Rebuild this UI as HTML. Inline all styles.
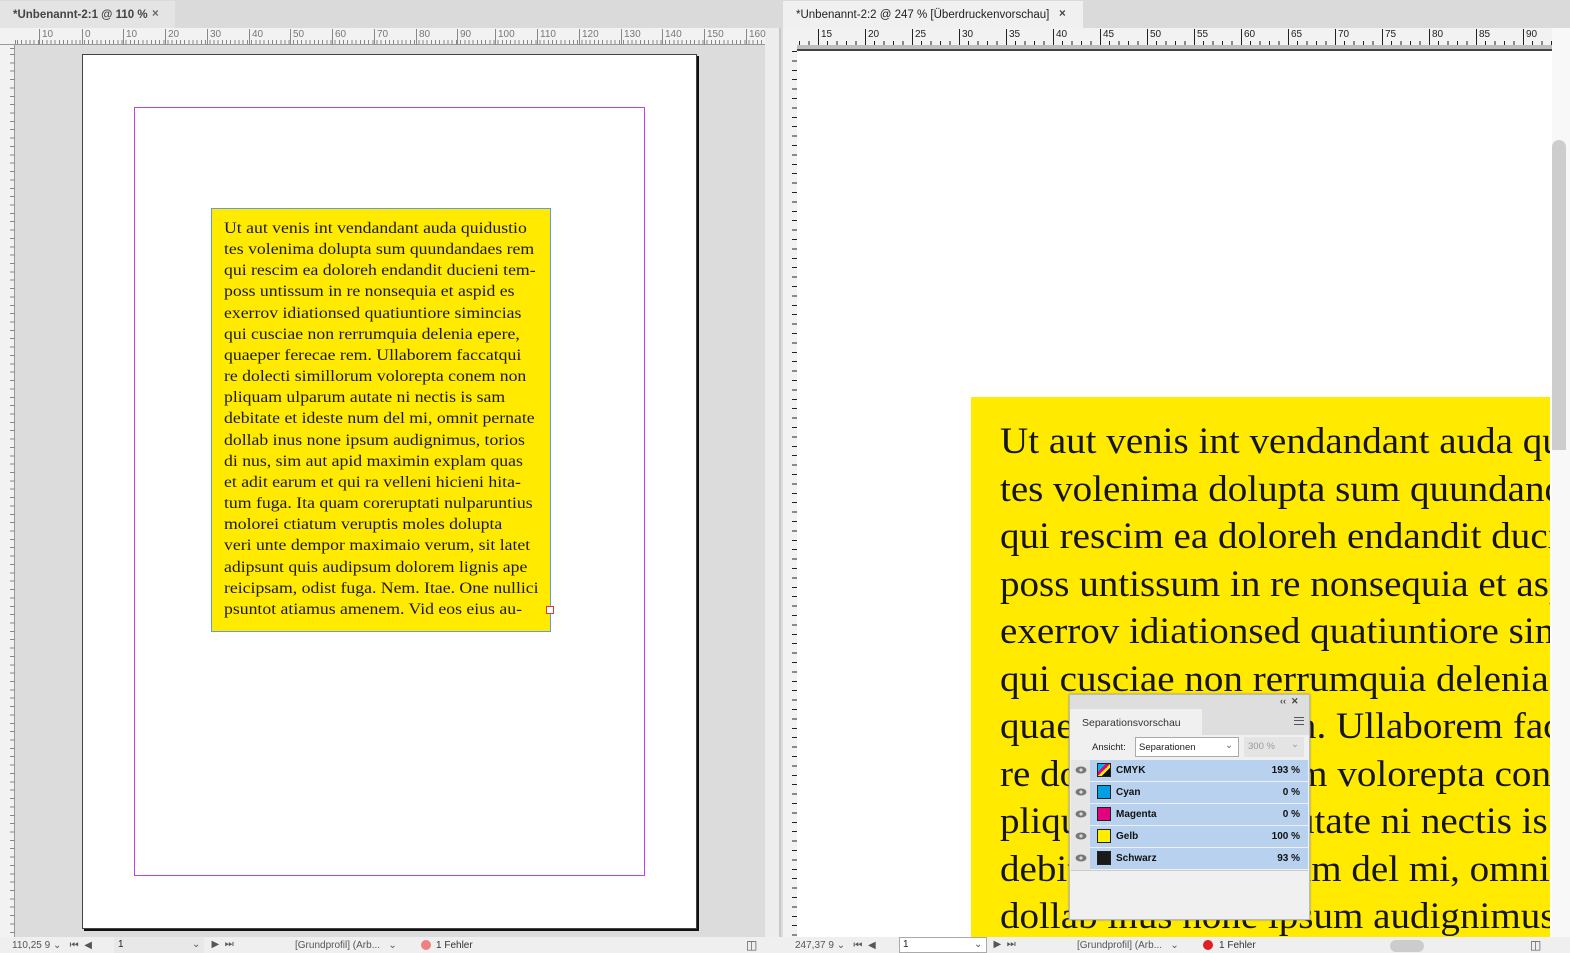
<!DOCTYPE html>
<html><head><meta charset="utf-8"><style>
*{margin:0;padding:0;box-sizing:border-box}
body{width:1570px;height:953px;overflow:hidden;background:#dcdcdc;font-family:"Liberation Sans",sans-serif;position:relative}
.a{position:absolute}
.tab{font-size:11.5px;color:#333;font-weight:bold}
.hr{background:#f2f2f2;height:17px;border-bottom:1px solid #999}
.lbl{position:absolute;top:1px;font-size:10px;color:#777;border-left:1px solid #888;padding-left:2px;height:16px}
.lblr{position:absolute;top:1px;font-size:10px;color:#222;border-left:1px solid #222;padding-left:2px;height:16px}
.serif{font-family:"Liberation Serif",serif;color:#1a1a1a}
.row{position:absolute;left:0;right:1px;height:21px;background:#b7d1ee;font-size:10px;font-weight:bold;color:#111}
.row .sw{position:absolute;left:7px;top:3px;width:14px;height:14px;border:1px solid #222}
.row .n{position:absolute;left:26px;top:5px}
.row .p{position:absolute;right:8px;top:5px}
.row .eye{position:absolute;left:-15px;top:4px;width:12px;height:12px}
.sb{font-size:10px;color:#555}
</style></head><body>
<div class="a" style="left:0;top:0;width:1570px;height:28px;background:#dadada"></div>
<div class="a" style="left:0;top:1px;width:175px;height:27px;background:#e4e4e4"></div>
<div class="a tab" style="left:13px;top:9px;color:#444">*Unbenannt-2:1 @ 110 %</div>
<div class="a tab" style="left:152px;top:8px;color:#666">×</div>
<div class="a" style="left:783px;top:1px;width:300px;height:27px;background:#f0f0f0"></div>
<div class="a tab" style="left:796px;top:9px;font-weight:normal;color:#222">*Unbenannt-2:2 @ 247 % [Überdruckenvorschau]</div>
<div class="a tab" style="left:1059px;top:8px;color:#444">×</div>

<div class="a hr" style="left:0;top:28px;width:765px"></div>
<div class="a" style="left:15px;top:40px;width:750px;height:4px;background:repeating-linear-gradient(90deg,#888 0 1px,transparent 1px 4.18px) 2px 0"></div>
<div class="a" style="left:0;top:45px;width:15px;height:892px;background:#f2f2f2;border-right:1px solid #999"></div>
<div class="a" style="left:10px;top:45px;width:5px;height:892px;background:repeating-linear-gradient(180deg,#888 0 1px,transparent 1px 8.36px) 0 9px"></div>
<div class="a" style="left:765px;top:28px;width:16px;height:909px;background:#ededed;border-right:2px solid #c8c8c8"></div>

<div class="a" style="left:84px;top:56px;width:615px;height:875px;background:#111"></div>
<div class="a" style="left:82px;top:54px;width:615px;height:875px;background:#fff;border:1px solid #444"></div>
<div class="a" style="left:134px;top:107px;width:511px;height:769px;border:1px solid #c040f0"></div>
<div class="a" style="left:211px;top:208px;width:340px;height:424px;background:#ffea00;border:1px solid #5b9bf0"></div>
<div class="a serif" style="left:224px;top:218px;font-size:15.4px;line-height:21.15px;white-space:pre;transform:scaleX(1.15);transform-origin:0 0">Ut aut venis int vendandant auda quidustio
tes volenima dolupta sum quundandaes rem
qui rescim ea doloreh endandit ducieni tem-
poss untissum in re nonsequia et aspid es
exerrov idiationsed quatiuntiore simincias
qui cusciae non rerrumquia delenia epere,
quaeper ferecae rem. Ullaborem faccatqui
re dolecti simillorum volorepta conem non
pliquam ulparum autate ni nectis is sam
debitate et ideste num del mi, omnit pernate
dollab inus none ipsum audignimus, torios
di nus, sim aut apid maximin explam quas
et adit earum et qui ra velleni hicieni hita-
tum fuga. Ita quam coreruptati nulparuntius
molorei ctiatum veruptis moles dolupta
veri unte dempor maximaio verum, sit latet
adipsunt quis audipsum dolorem lignis ape
reicipsam, odist fuga. Nem. Itae. One nullici
psuntot atiamus amenem. Vid eos eius au-</div>
<div class="a" style="left:546px;top:606px;width:8px;height:8px;border:1px solid #e33;background:#fff"></div>

<div class="lbl" style="left:39px;top:29px">10</div>
<div class="lbl" style="left:82px;top:29px">0</div>
<div class="lbl" style="left:123px;top:29px">10</div>
<div class="lbl" style="left:165px;top:29px">20</div>
<div class="lbl" style="left:207px;top:29px">30</div>
<div class="lbl" style="left:249px;top:29px">40</div>
<div class="lbl" style="left:290px;top:29px">50</div>
<div class="lbl" style="left:332px;top:29px">60</div>
<div class="lbl" style="left:374px;top:29px">70</div>
<div class="lbl" style="left:416px;top:29px">80</div>
<div class="lbl" style="left:457px;top:29px">90</div>
<div class="lbl" style="left:495px;top:29px">100</div>
<div class="lbl" style="left:537px;top:29px">110</div>
<div class="lbl" style="left:579px;top:29px">120</div>
<div class="lbl" style="left:621px;top:29px">130</div>
<div class="lbl" style="left:662px;top:29px">140</div>
<div class="lbl" style="left:704px;top:29px">150</div>
<div class="lbl" style="left:746px;top:29px">160</div>

<div class="a" style="left:783px;top:28px;width:787px;height:17px;background:#f2f2f2"></div>
<div class="a" style="left:797px;top:41px;width:755px;height:4px;background:repeating-linear-gradient(90deg,#222 0 1px,transparent 1px 9.4px) 2px 0"></div>
<div class="a" style="left:797px;top:45px;width:755px;height:6px;background:#bdbdbd;border-bottom:2px solid #444"></div>
<div class="a" style="left:783px;top:45px;width:14px;height:892px;background:#f2f2f2"></div>
<div class="a" style="left:792px;top:45px;width:5px;height:892px;background:repeating-linear-gradient(180deg,#222 0 1px,transparent 1px 9.4px) 0 6px"></div>
<div class="a" style="left:797px;top:51px;width:755px;height:886px;background:#fff"></div>
<div class="a" style="left:1552px;top:28px;width:18px;height:909px;background:#f8f8f8"></div>
<div class="a" style="left:1552px;top:140px;width:14px;height:310px;background:#cdcdcd;border-radius:7px 7px 0 0"></div>
<div class="a" style="left:971px;top:397px;width:579px;height:540px;background:#ffea00;overflow:hidden">
<div class="serif" style="position:absolute;left:29px;top:20px;font-size:36.5px;line-height:47.5px;white-space:pre;color:#151515;transform:scaleX(1.07);transform-origin:0 0">Ut aut venis int vendandant auda quidustio
tes volenima dolupta sum quundandaes rem
qui rescim ea doloreh endandit ducieni tem-
poss untissum in re nonsequia et aspid es
exerrov idiationsed quatiuntiore simincias
qui cusciae non rerrumquia delenia epere,
quaeper ferecae rem. Ullaborem faccatqui
re dolecti simillorum volorepta conem non
pliquam ulparum autate ni nectis is sam
debitate et ideste num del mi, omnit pernate
dollab inus none ipsum audignimus, torios</div></div>
<div class="lblr" style="left:818px;top:29px">15</div>
<div class="lblr" style="left:865px;top:29px">20</div>
<div class="lblr" style="left:912px;top:29px">25</div>
<div class="lblr" style="left:959px;top:29px">30</div>
<div class="lblr" style="left:1006px;top:29px">35</div>
<div class="lblr" style="left:1053px;top:29px">40</div>
<div class="lblr" style="left:1100px;top:29px">45</div>
<div class="lblr" style="left:1147px;top:29px">50</div>
<div class="lblr" style="left:1194px;top:29px">55</div>
<div class="lblr" style="left:1241px;top:29px">60</div>
<div class="lblr" style="left:1288px;top:29px">65</div>
<div class="lblr" style="left:1335px;top:29px">70</div>
<div class="lblr" style="left:1382px;top:29px">75</div>
<div class="lblr" style="left:1429px;top:29px">80</div>
<div class="lblr" style="left:1476px;top:29px">85</div>
<div class="lblr" style="left:1523px;top:29px">90</div>

<div class="a" style="left:1069px;top:694px;width:241px;height:226px;background:#f0f0f0;border:1px solid #bbb;box-shadow:0 0 2px #888">
 <div class="a" style="left:0;top:0;width:239px;height:14px;background:#dedede"></div>
 <div class="a" style="left:210px;top:1px;font-size:9px;color:#444;font-weight:bold">‹‹ &nbsp;✕</div>
 <div class="a" style="left:0;top:14px;width:239px;height:26px;background:#dedede"></div>
 <div class="a" style="left:0;top:14px;width:132px;height:27px;background:#f0f0f0"></div>
 <div class="a" style="left:12px;top:22px;font-size:10.5px;color:#333">Separationsvorschau</div>
 <div class="a" style="left:224px;top:22px;width:10px;height:8px;border-top:1px solid #555;border-bottom:1px solid #555"><div style="margin-top:2px;border-top:1px solid #555"></div></div>
 <div class="a" style="left:22px;top:47px;font-size:9.5px;color:#222">Ansicht:</div>
 <div class="a" style="left:65px;top:42px;width:104px;height:20px;background:#fff;border:1px solid #aaa;font-size:9.5px;padding:4px 3px;color:#222">Separationen<span style="position:absolute;right:5px;top:2px;color:#666">⌄</span></div>
 <div class="a" style="left:174px;top:42px;width:60px;height:20px;background:#e4e4e4;font-size:9.5px;padding:4px 4px;color:#999">300 %<span style="position:absolute;right:5px;top:2px">⌄</span></div>
 <div class="a" style="left:1px;top:64px;width:237px;height:112px;background:#f0f0f0;border-bottom:1px solid #ccc"></div>
 <div class="a" style="left:1px;top:65px;width:19px;height:110px;background:#e6e6e6"></div>
</div>
<div class="a" style="left:1090px;top:760px;width:219px">
 <div class="row" style="top:0"><svg class="eye" viewBox="0 0 12 12"><ellipse cx="6" cy="6" rx="5.5" ry="3.5" fill="#777"/><circle cx="6" cy="6" r="1.6" fill="#ddd"/></svg><span class="sw" style="background:linear-gradient(135deg,#00b0f0 0 33%,#e5007d 33% 50%,#ffed00 50% 66%,#111 66%)"></span><span class="n">CMYK</span><span class="p">193 %</span></div>
 <div class="row" style="top:22px"><svg class="eye" viewBox="0 0 12 12"><ellipse cx="6" cy="6" rx="5.5" ry="3.5" fill="#777"/><circle cx="6" cy="6" r="1.6" fill="#ddd"/></svg><span class="sw" style="background:#009fe3"></span><span class="n">Cyan</span><span class="p">0 %</span></div>
 <div class="row" style="top:44px"><svg class="eye" viewBox="0 0 12 12"><ellipse cx="6" cy="6" rx="5.5" ry="3.5" fill="#777"/><circle cx="6" cy="6" r="1.6" fill="#ddd"/></svg><span class="sw" style="background:#e5007d"></span><span class="n">Magenta</span><span class="p">0 %</span></div>
 <div class="row" style="top:66px"><svg class="eye" viewBox="0 0 12 12"><ellipse cx="6" cy="6" rx="5.5" ry="3.5" fill="#777"/><circle cx="6" cy="6" r="1.6" fill="#ddd"/></svg><span class="sw" style="background:#ffed00"></span><span class="n">Gelb</span><span class="p">100 %</span></div>
 <div class="row" style="top:88px"><svg class="eye" viewBox="0 0 12 12"><ellipse cx="6" cy="6" rx="5.5" ry="3.5" fill="#777"/><circle cx="6" cy="6" r="1.6" fill="#ddd"/></svg><span class="sw" style="background:#1a1a1a"></span><span class="n">Schwarz</span><span class="p">93 %</span></div>
</div>

<div class="a" style="left:0;top:937px;width:1570px;height:16px;background:#efefef"></div>
<div class="a sb" style="left:12px;top:940px">110,25 9 ⌄ &nbsp; ⏮ &nbsp;◀</div>
<div class="a" style="left:114px;top:937px;width:90px;height:16px;background:#e8e8e8"></div>
<div class="a sb" style="left:118px;top:939px;color:#222">1</div>
<div class="a sb" style="left:192px;top:939px">⌄ &nbsp;&nbsp; ▶ &nbsp;⏭</div>
<div class="a sb" style="left:295px;top:940px">[Grundprofil] (Arb... &nbsp; ⌄</div>
<div class="a" style="left:421px;top:940px;width:10px;height:10px;border-radius:50%;background:#f08080"></div>
<div class="a sb" style="left:436px;top:940px;color:#333">1 Fehler</div>
<div class="a sb" style="left:746px;top:938px;font-size:12px">◫</div>
<div class="a sb" style="left:795px;top:940px">247,37 9 ⌄ &nbsp; ⏮ &nbsp;◀</div>
<div class="a" style="left:899px;top:937px;width:88px;height:16px;background:#fff;border:1px solid #aaa"></div>
<div class="a sb" style="left:903px;top:939px;color:#222">1</div>
<div class="a sb" style="left:974px;top:939px">⌄ &nbsp;&nbsp; ▶ &nbsp;⏭</div>
<div class="a sb" style="left:1077px;top:940px">[Grundprofil] (Arb... &nbsp; ⌄</div>
<div class="a" style="left:1203px;top:940px;width:10px;height:10px;border-radius:50%;background:#e02020"></div>
<div class="a sb" style="left:1219px;top:940px;color:#333">1 Fehler</div>
<div class="a" style="left:1390px;top:940px;width:34px;height:12px;border-radius:6px;background:#ccc"></div>
<div class="a sb" style="left:1530px;top:938px;font-size:12px">◫</div>
</body></html>
